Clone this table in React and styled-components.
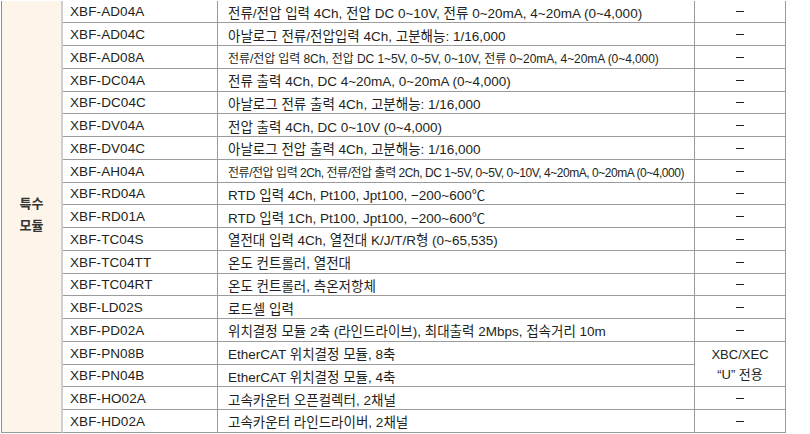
import React from 'react';
import styled, { createGlobalStyle } from 'styled-components';

const GlobalStyle = createGlobalStyle`
  html, body {
    margin: 0;
    padding: 0;
    background: #ffffff;
  }
  body {
    font-family: "Liberation Sans", "Noto Sans CJK KR", sans-serif;
    color: #231f20;
  }
`;

const rows = [
  { model: 'XBF-AD04A', desc: '전류/전압 입력 4Ch, 전압 DC 0~10V, 전류 0~20mA, 4~20mA (0~4,000)', compat: '−' },
  { model: 'XBF-AD04C', desc: '아날로그 전류/전압입력 4Ch, 고분해능: 1/16,000', compat: '−' },
  { model: 'XBF-AD08A', desc: '전류/전압 입력 8Ch, 전압 DC 1~5V, 0~5V, 0~10V, 전류 0~20mA, 4~20mA (0~4,000)', compat: '−', tight: -0.08 },
  { model: 'XBF-DC04A', desc: '전류 출력 4Ch, DC 4~20mA, 0~20mA (0~4,000)', compat: '−' },
  { model: 'XBF-DC04C', desc: '아날로그 전류 출력 4Ch, 고분해능: 1/16,000', compat: '−' },
  { model: 'XBF-DV04A', desc: '전압 출력 4Ch, DC 0~10V (0~4,000)', compat: '−' },
  { model: 'XBF-DV04C', desc: '아날로그 전압 출력 4Ch, 고분해능: 1/16,000', compat: '−' },
  { model: 'XBF-AH04A', desc: '전류/전압 입력 2Ch, 전류/전압 출력 2Ch, DC 1~5V, 0~5V, 0~10V, 4~20mA, 0~20mA (0~4,000)', compat: '−', tight: -0.46 },
  { model: 'XBF-RD04A', desc: 'RTD 입력 4Ch, Pt100, Jpt100, −200~600℃', compat: '−' },
  { model: 'XBF-RD01A', desc: 'RTD 입력 1Ch, Pt100, Jpt100, −200~600℃', compat: '−' },
  { model: 'XBF-TC04S', desc: '열전대 입력 4Ch, 열전대 K/J/T/R형 (0~65,535)', compat: '−' },
  { model: 'XBF-TC04TT', desc: '온도 컨트롤러, 열전대', compat: '−' },
  { model: 'XBF-TC04RT', desc: '온도 컨트롤러, 측온저항체', compat: '−' },
  { model: 'XBF-LD02S', desc: '로드셀 입력', compat: '−' },
  { model: 'XBF-PD02A', desc: '위치결정 모듈 2축 (라인드라이브), 최대출력 2Mbps, 접속거리 10m', compat: '−' },
  { model: 'XBF-PN08B', desc: 'EtherCAT 위치결정 모듈, 8축', compat: 'ucombo' },
  { model: 'XBF-PN04B', desc: 'EtherCAT 위치결정 모듈, 4축', compat: null },
  { model: 'XBF-HO02A', desc: '고속카운터 오픈컬렉터, 2채널', compat: '−' },
  { model: 'XBF-HD02A', desc: '고속카운터 라인드라이버, 2채널', compat: '−' },
];

const ROW_H = 22.75;

const Page = styled.div`
  padding-left: 1px;
  margin-top: 0.5px;
`;

const Grid = styled.div`
  display: grid;
  grid-template-columns: 61px 155px 477px 91px;
  grid-template-rows: repeat(${rows.length}, ${ROW_H}px);
  width: 784px;
  border-left: 1px solid #8f8f8f;
  box-sizing: border-box;
`;

const Category = styled.div`
  grid-column: 1;
  grid-row: 1 / ${rows.length + 1};
  background: #fdf5ea;
  border-right: 2px solid #cfcfcf;
  border-bottom: 1px solid #9b9b9b;
  box-sizing: border-box;
  display: flex;
  flex-direction: column;
  align-items: center;
  justify-content: center;
  padding-bottom: 4px;
  font-family: "Noto Sans CJK KR", sans-serif;
  font-weight: 700;
  font-size: 13px;
  line-height: 22px;
  color: #333;
`;

const Cell = styled.div`
  box-sizing: border-box;
  border-bottom: 1px solid #9b9b9b;
  border-right: 1px solid #9b9b9b;
  display: flex;
  align-items: center;
  white-space: nowrap;
  overflow: hidden;
  font-size: 13.5px;
  padding-top: 1px;
`;

const ModelCell = styled(Cell)`
  padding-left: 7px;
  letter-spacing: 0.1px;
`;

const DescCell = styled(Cell)`
  padding-left: 10px;
  font-size: ${(p) => (p.$tight !== undefined ? '12px' : '13.5px')};
  letter-spacing: ${(p) => (p.$tight !== undefined ? `${p.$tight}px` : '0')};
`;

const CompatCell = styled(Cell)`
  justify-content: center;
  text-align: center;
  flex-direction: column;
  font-size: 13px;
  line-height: 20px;
`;

const Dash = styled.span`
  display: inline-block;
  width: 8px;
  height: 1px;
  background: #231f20;
`;

export default function App() {
  return (
    <Page>
      <GlobalStyle />
      <Grid>
        <Category>
          <span>특수</span>
          <span>모듈</span>
        </Category>
        {rows.map((r, i) => (
          <React.Fragment key={r.model}>
            <ModelCell style={{ gridRow: i + 1, gridColumn: 2 }}>{r.model}</ModelCell>
            <DescCell $tight={r.tight} style={{ gridRow: i + 1, gridColumn: 3 }}>
              {r.desc}
            </DescCell>
            {r.compat === 'ucombo' && (
              <CompatCell style={{ gridRow: `${i + 1} / span 2`, gridColumn: 4 }}>
                <span>XBC/XEC</span>
                <span>“U” 전용</span>
              </CompatCell>
            )}
            {r.compat === '−' && (
              <CompatCell style={{ gridRow: i + 1, gridColumn: 4 }}>
                <Dash aria-label="−" />
              </CompatCell>
            )}
          </React.Fragment>
        ))}
      </Grid>
    </Page>
  );
}
